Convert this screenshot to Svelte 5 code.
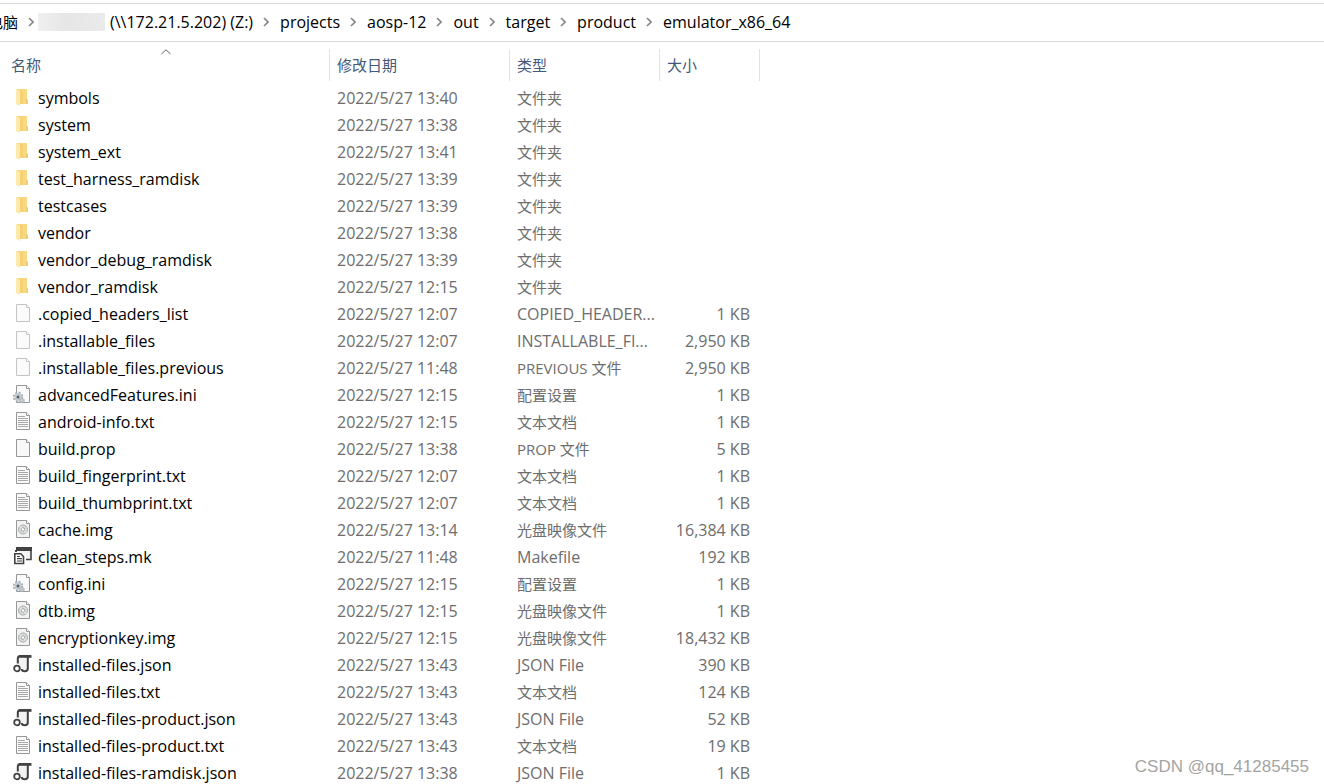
<script>
  const crumbs = ["projects", "aosp-12", "out", "target", "product", "emulator_x86_64"];

  const columns = [
    { key: "name", label: "名称" },
    { key: "date", label: "修改日期" },
    { key: "type", label: "类型" },
    { key: "size", label: "大小" },
  ];

  const rows = [
    ["folder", "symbols", "13:40", "文件夹", ""],
    ["folder", "system", "13:38", "文件夹", ""],
    ["folder", "system_ext", "13:41", "文件夹", ""],
    ["folder", "test_harness_ramdisk", "13:39", "文件夹", ""],
    ["folder", "testcases", "13:39", "文件夹", ""],
    ["folder", "vendor", "13:38", "文件夹", ""],
    ["folder", "vendor_debug_ramdisk", "13:39", "文件夹", ""],
    ["folder", "vendor_ramdisk", "12:15", "文件夹", ""],
    ["hidden", ".copied_headers_list", "12:07", "COPIED_HEADER...", "1 KB"],
    ["hidden", ".installable_files", "12:07", "INSTALLABLE_FI...", "2,950 KB"],
    ["hidden", ".installable_files.previous", "11:48", "PREVIOUS 文件", "2,950 KB"],
    ["config", "advancedFeatures.ini", "12:15", "配置设置", "1 KB"],
    ["text", "android-info.txt", "12:15", "文本文档", "1 KB"],
    ["file", "build.prop", "13:38", "PROP 文件", "5 KB"],
    ["text", "build_fingerprint.txt", "12:07", "文本文档", "1 KB"],
    ["text", "build_thumbprint.txt", "12:07", "文本文档", "1 KB"],
    ["disc", "cache.img", "13:14", "光盘映像文件", "16,384 KB"],
    ["make", "clean_steps.mk", "11:48", "Makefile", "192 KB"],
    ["config", "config.ini", "12:15", "配置设置", "1 KB"],
    ["disc", "dtb.img", "12:15", "光盘映像文件", "1 KB"],
    ["disc", "encryptionkey.img", "12:15", "光盘映像文件", "18,432 KB"],
    ["json", "installed-files.json", "13:43", "JSON File", "390 KB"],
    ["text", "installed-files.txt", "13:43", "文本文档", "124 KB"],
    ["json", "installed-files-product.json", "13:43", "JSON File", "52 KB"],
    ["text", "installed-files-product.txt", "13:43", "文本文档", "19 KB"],
    ["json", "installed-files-ramdisk.json", "13:38", "JSON File", "1 KB"],
  ];

  const files = rows.map(([icon, name, time, type, size]) => ({
    icon,
    name,
    date: `2022/5/27 ${time}`,
    type,
    size,
  }));

  const hasHan = (text) => /\p{Script=Han}/u.test(text);
</script>

{#snippet chevron()}
  <svg class="chevron" width="6" height="10" viewBox="0 0 6 10" aria-hidden="true">
    <path d="M1 1l4 4-4 4" fill="none" stroke="#858585" stroke-width="1.6" />
  </svg>
{/snippet}

{#snippet page(stroke, fill)}
  <path d="M3.5 1.5h10l3 3v14h-13z" {fill} {stroke} />
  <path d="M13.5 1.5v3h3" fill="#fff" {stroke} />
{/snippet}

{#snippet fileIcon(kind)}
  <svg class="icon" width="20" height="20" viewBox="0 0 20 20" aria-hidden="true">
    {#if kind === "folder"}
      <path d="M4 2h10v10l1 1v4H4z" fill="#f8d980" />
      <path d="M7 3h3v14H7z" fill="#f4d077" />
      <path d="M14 12l1 1v4h-2v-5z" fill="#f2cd70" />
      <path d="M3 2l4 2v15l-4-2z" fill="#fde9a9" />
    {:else if kind === "hidden"}
      {@render page("#c4c4c4", "#fbfbfb")}
    {:else if kind === "file"}
      {@render page("#979797", "#f8f8f8")}
    {:else if kind === "text"}
      {@render page("#979797", "#fafafa")}
      <path d="M5 5.500h7M5 7.500h10M5 9.500h10M5 11.500h10M5 13.500h10M5 15.500h10" stroke="#a8a8a8" />
    {:else if kind === "disc"}
      {@render page("#979797", "#f2f2f2")}
      <circle cx="10" cy="10.500" r="4.500" fill="#dcdfe0" stroke="#a5a9aa" />
      <circle cx="10" cy="10.500" r="1.800" fill="#fff" stroke="#989c9e" />
      <path d="M7 7.500l2 2M11 11.500l2 2" stroke="#f7f7f7" />
    {:else if kind === "config"}
      {@render page("#979797", "#fafafa")}
      <circle cx="5" cy="13" r="4.300" fill="none" stroke="#9ba4aa" stroke-width="1.800" stroke-dasharray="1.800 1.600" />
      <circle cx="5" cy="13" r="3.900" fill="#c3cbd1" />
      <circle cx="5" cy="13" r="1.500" fill="#5a636a" />
      <circle cx="9" cy="16.500" r="2.200" fill="#c3cbd1" stroke="#9ba4aa" stroke-dasharray="1.200 1" />
    {:else if kind === "make"}
      <path d="M3 1h16v4H3z" fill="#424242" />
      <path d="M2 4h2v2H2z" fill="#424242" />
      <path d="M5 5h13v8h-5V9l-2-2H5z" fill="#f3f3f3" />
      <path d="M18 4v9.500h-5" fill="none" stroke="#424242" stroke-width="1.600" />
      <path d="M1.800 7.800h6l2.700 2.700v7H1.800z" fill="#fff" stroke="#424242" stroke-width="1.600" />
      <path d="M4 10.500h3M4 12.700h5M4 15h5" stroke="#424242" stroke-width="1.200" />
    {:else if kind === "json"}
      <path d="M5 4h9v12H8L5 10z" fill="#f2f2f2" />
      <path d="M4.800 9.500V4.500q0-2.500 2.500-2.500h10.500" fill="none" stroke="#424242" stroke-width="2" />
      <path d="M6 1.200h12.500v2.600H6z" fill="#424242" />
      <path d="M14.800 3v11.500q0 2.800-3 2.800-3 0-3-2.300" fill="none" stroke="#424242" stroke-width="2" />
      <circle cx="4" cy="14.500" r="2.800" fill="#fff" stroke="#424242" stroke-width="1.800" />
    {/if}
  </svg>
{/snippet}

<main class="explorer">
  <nav class="address" aria-label="地址">
    <a class="crumb pc" href="#pc">电脑</a>
    {@render chevron()}
    <a class="crumb drive" href="#z">
      <span class="masked"></span>
      <span>(\\172.21.5.202) (Z:)</span>
    </a>
    {#each crumbs as crumb}
      {@render chevron()}
      <a class="crumb" href="#{crumb}">{crumb}</a>
    {/each}
  </nav>

  <table class="files">
    <colgroup>
      <col class="col-name" />
      <col class="col-date" />
      <col class="col-type" />
      <col class="col-size" />
    </colgroup>
    <thead>
      <tr>
        {#each columns as column}
          <th scope="col" aria-sort={column.key === "name" ? "ascending" : undefined}>
            <button class="sort">
              {column.label}
              {#if column.key === "name"}
                <svg class="sort-arrow" width="10" height="6" viewBox="0 0 10 6" aria-hidden="true">
                  <path d="M0.500 5L5 0.800 9.500 5" fill="none" stroke="#666" />
                </svg>
              {/if}
            </button>
          </th>
        {/each}
      </tr>
    </thead>
    <tbody>
      {#each files as file}
        <tr>
          <td class="name">
            <div class="entry">
              {@render fileIcon(file.icon)}
              <span>{file.name}</span>
            </div>
          </td>
          <td>{file.date}</td>
          <td class={{ han: hasHan(file.type) }}>{file.type}</td>
          <td class="size">{file.size}</td>
        </tr>
      {/each}
    </tbody>
  </table>

  <div class="watermark">CSDN @qq_41285455</div>
</main>

<style>
  :global(body) {
    margin: 0;
    background: #fff;
  }

  .explorer {
    position: relative;
    box-sizing: border-box;
    height: 100vh;
    padding-top: 3px;
    overflow: hidden;
    font-family: "Open Sans", "Noto Sans CJK SC", sans-serif;
    font-size: 16px;
    color: #000;
  }

  .address {
    display: flex;
    align-items: center;
    height: 35px;
    padding: 0 12px 2px 0;
    border-top: 1px solid #d9d9d9;
    border-bottom: 1px solid #d9d9d9;
    white-space: nowrap;
  }

  .crumb {
    color: inherit;
    text-decoration: none;
  }

  .pc {
    margin-left: -12px;
    font-size: 15px;
  }

  .crumb:hover {
    background: #e5f3ff;
  }

  .drive {
    display: flex;
    align-items: center;
    gap: 5px;
  }

  .masked {
    width: 67px;
    height: 18px;
    background: linear-gradient(90deg, #f0f0f0, #e6e6e6 40%, #ebebeb);
  }

  .chevron {
    flex: none;
    margin: 0 11px 0 10px;
  }

  .chevron:nth-child(2) {
    margin-right: 4px;
  }

  .files {
    width: 760px;
    table-layout: fixed;
    border-collapse: collapse;
  }

  .col-name {
    width: 330px;
  }

  .col-date {
    width: 180px;
  }

  .col-type {
    width: 150px;
  }

  .col-size {
    width: 100px;
  }

  th {
    height: 32px;
    padding: 7px 0 4px;
    font-weight: normal;
  }

  .sort {
    position: relative;
    display: block;
    width: 100%;
    height: 32px;
    padding: 0 7px;
    border: 0;
    border-right: 1px solid #e2e2e2;
    background: none;
    font: inherit;
    font-size: 15px;
    line-height: 32px;
    text-align: left;
    color: #43597a;
  }

  th:first-child .sort {
    padding-left: 11px;
  }

  .sort:hover {
    background: #d9ebf9;
  }

  .sort-arrow {
    position: absolute;
    top: 0;
    left: calc(50% - 4px);
  }

  td {
    height: 27px;
    padding: 0 7px;
    line-height: 27px;
    white-space: nowrap;
    color: #6d6d6d;
  }

  .han {
    font-size: 15px;
  }

  .name {
    padding-left: 13px;
    color: #000;
  }

  .entry {
    display: flex;
    align-items: center;
    gap: 5px;
  }

  .icon {
    flex: none;
    margin-bottom: 3px;
  }

  .size {
    padding-right: 10px;
    text-align: right;
  }

  tbody tr:hover {
    background: #e5f3ff;
  }

  .watermark {
    position: absolute;
    right: 15px;
    bottom: 7px;
    font-family: "Liberation Sans", Arial, sans-serif;
    font-size: 17px;
    line-height: 20px;
    color: #a4a4a4;
  }
</style>
